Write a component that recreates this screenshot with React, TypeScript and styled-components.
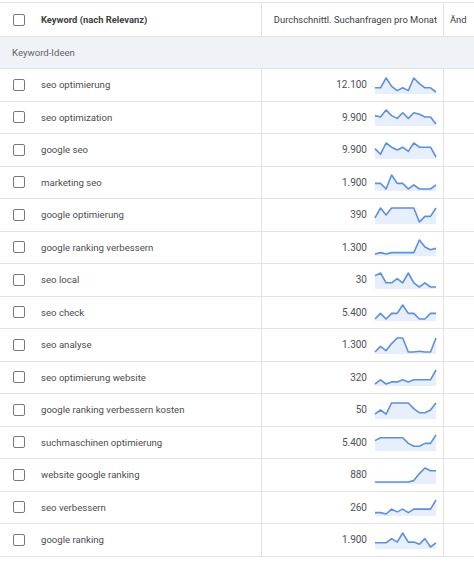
import styled, { createGlobalStyle } from 'styled-components';

const GlobalStyle = createGlobalStyle`
    html, body {
        margin: 0;
        padding: 0;
        background: #ffffff;
        overflow: hidden;
    }
    body {
        font-family: Roboto, "Liberation Sans", Arial, sans-serif;
        color: #3c4043;
    }
`;

type Idea = { keyword: string; volume: string; trend: number[] };

const ideas: Idea[] = [
    { keyword: "seo optimierung", volume: "12.100", trend: [0.3, 0.3, 1.0, 0.4, 0.1, 0.3, 0.1, 1.0, 0.6, 0.3, 0.3, 0.0] },
    { keyword: "seo optimization", volume: "9.900", trend: [0.6, 0.5, 1.0, 0.6, 0.4, 0.8, 0.4, 0.8, 0.7, 0.5, 0.5, 0.0] },
    { keyword: "google seo", volume: "9.900", trend: [0.6, 0.2, 1.0, 0.7, 0.5, 0.7, 0.4, 1.0, 0.7, 0.7, 0.7, 0.0] },
    { keyword: "marketing seo", volume: "1.900", trend: [0.4, 0.4, 0.0, 1.0, 0.4, 0.4, 0.0, 0.3, 0.0, 0.0, 0.0, 0.3] },
    { keyword: "google optimierung", volume: "390", trend: [0.3, 1.0, 0.5, 1.0, 1.0, 1.0, 1.0, 1.0, 0.0, 0.4, 0.4, 1.0] },
    { keyword: "google ranking verbessern", volume: "1.300", trend: [0.0, 0.1, 0.0, 0.1, 0.1, 0.1, 0.1, 0.1, 1.0, 0.5, 0.3, 0.4] },
    { keyword: "seo local", volume: "30", trend: [0.8, 1.0, 0.3, 0.3, 0.6, 0.3, 1.0, 0.3, 0.0, 0.3, 0.0, 0.0] },
    { keyword: "seo check", volume: "5.400", trend: [0.0, 0.4, 0.0, 0.4, 0.4, 1.0, 0.4, 0.4, 0.0, 0.0, 0.4, 0.4] },
    { keyword: "seo analyse", volume: "1.300", trend: [0.0, 0.4, 0.1, 0.6, 1.0, 1.0, 0.0, 0.0, 0.05, 0.0, 0.0, 1.0] },
    { keyword: "seo optimierung website", volume: "320", trend: [0.0, 0.3, 0.0, 0.15, 0.15, 0.3, 0.15, 0.3, 0.3, 0.3, 0.3, 1.0] },
    { keyword: "google ranking verbessern kosten", volume: "50", trend: [0.2, 0.5, 0.2, 1.0, 1.0, 1.0, 1.0, 0.6, 0.3, 0.3, 0.5, 1.0] },
    { keyword: "suchmaschinen optimierung", volume: "5.400", trend: [0.6, 0.8, 0.8, 0.8, 0.8, 0.8, 0.4, 0.2, 0.2, 0.4, 0.4, 1.0] },
    { keyword: "website google ranking", volume: "880", trend: [0.0, 0.0, 0.0, 0.0, 0.0, 0.0, 0.0, 0.1, 0.6, 1.0, 0.8, 0.8] },
    { keyword: "seo verbessern", volume: "260", trend: [0.1, 0.1, 0.0, 0.35, 0.15, 0.35, 0.1, 0.35, 0.35, 0.35, 0.35, 1.0] },
    { keyword: "google ranking", volume: "1.900", trend: [0.3, 0.3, 0.3, 0.6, 0.35, 1.0, 0.35, 0.35, 0.2, 0.6, 0.0, 0.3] },
];

const Table = styled.div`
    margin-top: 2px;
    width: 474px;
    overflow: hidden;
    border-top: 1px solid #e3e3e3;
`;

const Row = styled.div<{ height: string }>`
    display: grid;
    grid-template-columns: 262px 182px 1fr;
    height: ${({ height }) => height};
    border-bottom: 1px solid #e3e3e3;
    box-sizing: border-box;
`;

const Cell = styled.div<{ last?: boolean }>`
    display: flex;
    align-items: center;
    border-right: ${({ last }) => (last ? "none" : "1px solid #e3e3e3")};
    font-size: 9.6px;
    box-sizing: border-box;
    overflow: hidden;
    white-space: nowrap;
`;

const KeywordCell = styled(Cell)`
    padding-left: 13px;
    gap: 16px;
`;

const ChangeCell = styled(Cell)`
    padding-left: 6px;
    align-items: center;
`;

const HeaderTitle = styled.span<{ bold?: boolean }>`
    font-weight: ${({ bold }) => (bold ? 700 : 400)};
    color: #3c4043;
    font-size: 9.4px;
`;

const GroupRow = styled.div`
    height: 32px;
    background: #eff2f6;
    border-bottom: 1px solid #e3e3e3;
    box-sizing: border-box;
    display: flex;
    align-items: center;
    padding-left: 12px;
    font-size: 9.6px;
    color: #5f6368;
`;

const Checkbox = styled.span`
    width: 12px;
    height: 12px;
    border: 1.5px solid #777777;
    border-radius: 2px;
    box-sizing: border-box;
    flex: none;
`;

const Keyword = styled.span`
    color: #4a4d50;
`;

const VolumeCell = styled(Cell)`
    justify-content: flex-end;
    padding-right: 6px;
    gap: 7px;
`;

const Volume = styled.span`
    color: #4d5156;
    font-size: 10px;
`;

const Spark = ({ data }: { data: number[] }) => {
    const w = 63;
    const h = 18;
    const top = 2;
    const bottom = 16;
    const pts = data.map((v, i) => [
        (i * (w - 2)) / (data.length - 1) + 1,
        bottom - v * (bottom - top),
    ]);
    const line = pts.map(([x, y]) => `${x.toFixed(1)},${y.toFixed(1)}`).join(" ");
    const area = `1,${h} ${line} ${w - 1},${h}`;
    return (
        <svg width={w} height={h} viewBox={`0 0 ${w} ${h}`}>
            <polygon points={area} fill="#e8effc" />
            <polyline points={line} fill="none" stroke="#5d8fe0" strokeWidth={1.6} strokeLinejoin="round" />
        </svg>
    );
};

export default function App() {
    return (
        <>
            <GlobalStyle />
            <Table>
                <Row height="34px">
                    <KeywordCell>
                        <Checkbox />
                        <HeaderTitle bold>Keyword (nach Relevanz)</HeaderTitle>
                    </KeywordCell>
                    <VolumeCell>
                        <HeaderTitle>Durchschnittl. Suchanfragen pro Monat</HeaderTitle>
                    </VolumeCell>
                    <ChangeCell last>
                        <HeaderTitle>Änd</HeaderTitle>
                    </ChangeCell>
                </Row>
                <GroupRow>Keyword-Ideen</GroupRow>
                {ideas.map((idea) => (
                    <Row key={idea.keyword} height="32.5px">
                        <KeywordCell>
                            <Checkbox />
                            <Keyword>{idea.keyword}</Keyword>
                        </KeywordCell>
                        <VolumeCell>
                            <Volume>{idea.volume}</Volume>
                            <Spark data={idea.trend} />
                        </VolumeCell>
                        <Cell last />
                    </Row>
                ))}
            </Table>
        </>
    );
}
